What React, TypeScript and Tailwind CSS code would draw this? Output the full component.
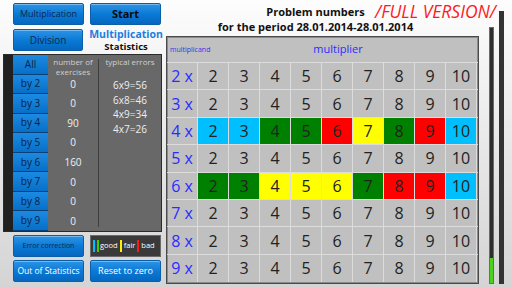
import React from "react";

const btn =
  "flex items-center justify-center rounded-[2px] border border-[#0b5fa8] bg-gradient-to-b from-[#2b94e6] via-[#0a7ad6] to-[#0567c0] shadow-[inset_0_1px_0_rgba(255,255,255,0.35)]";

const rowsColors: Record<number, string[]> = {
  4: ["#00bfff", "#00bfff", "#008000", "#008000", "#ff0000", "#ffff00", "#008000", "#ff0000", "#00bfff"],
  6: ["#008000", "#008000", "#ffff00", "#ffff00", "#ffff00", "#008000", "#ff0000", "#ff0000", "#00bfff"],
};

export default function App() {
  const byRows = ["All", "by 2", "by 3", "by 4", "by 5", "by 6", "by 7", "by 8", "by 9"];
  const counts = ["", "0", "0", "90", "0", "160", "0", "0", "0"];
  const mults = [2, 3, 4, 5, 6, 7, 8, 9];
  const cols = [2, 3, 4, 5, 6, 7, 8, 9, 10];
  return (
    <div className="relative flex h-[288px] w-[512px] overflow-hidden bg-gradient-to-b from-[#fdfdfd] to-[#d4d4d4] font-['Open_Sans',sans-serif]">
      {/* Left column */}
      <div className="flex w-[163px] shrink-0 flex-col pl-[3px] pt-[3px]">
        <div className="ml-[10px] flex h-[22px] gap-[6px]">
          <div className={`${btn} h-[22px] w-[71px] text-[9px] text-[#0d2850]`}>Multiplication</div>
          <div className={`${btn} h-[22px] w-[71px] text-[11px] font-bold text-[#0a0a0a]`}>Start</div>
        </div>
        <div className="ml-[10px] mt-[4px] flex h-[22px] gap-[6px]">
          <div className={`${btn} h-[22px] w-[71px] text-[10px] text-[#0d2850]`}>Division</div>
          <div className="-mt-[1px] flex h-[23px] w-[75px] flex-col items-center">
            <span className="text-[10.5px] font-bold leading-[13px] text-[#1a7fe0]">Multiplication</span>
            <span className="text-[9.5px] font-bold leading-[11px] text-[#111]">Statistics</span>
          </div>
        </div>
        {/* stats panel */}
        <div className="mt-[3px] flex h-[178px] w-[159px] border border-[#2a2a2a] bg-[#686868]">
          <div className="w-[9px] bg-[#202020]" />
          <div className="grid w-[35px] grid-rows-9 bg-[#202020]">
            {byRows.map((r) => (
              <div
                key={r}
                className="flex items-center justify-center border-b border-[#0a3f78] bg-gradient-to-b from-[#1c8ae2] to-[#0670c8] text-[10px] text-[#0c2244]"
              >
                {r}
              </div>
            ))}
          </div>
          <div className="grid w-[50px] grid-rows-9">
            {counts.map((c, i) =>
              i === 0 ? (
                <div key={i} className="flex flex-col items-center pt-[2px] text-[8px] leading-[9.5px] text-[#d0d0d0]">
                  <span>number of</span>
                  <span>exercises</span>
                </div>
              ) : (
                <div key={i} className="flex items-center justify-center text-[10px] text-[#f0f0f0]">
                  {c}
                </div>
              )
            )}
          </div>
          <div className="my-[4px] w-px bg-[#3e3e3e]" />
          <div className="flex flex-1 flex-col items-center pt-[2px] text-[#eeeeee]">
            <span className="text-[8px] leading-[10px] text-[#d0d0d0]">typical errors</span>
            <div className="mt-[11px] flex flex-col items-center text-[10px] leading-[14.7px]">
              <span>6x9=56</span>
              <span>6x8=46</span>
              <span>4x9=34</span>
              <span>4x7=26</span>
            </div>
          </div>
        </div>
        <div className="ml-[10px] mt-[3px] flex gap-[6px]">
          <div className={`${btn} h-[22px] w-[71px] text-[7px] text-[#0d2850]`}>Error correction</div>
          <div className="flex h-[22px] w-[71px] items-center gap-[2px] border border-[#6a6a6a] bg-[#3a3a3a] pl-[2px] text-[7.5px] text-white">
            <span className="h-[12px] w-[2px] bg-[#00bfff]" />
            <span className="h-[12px] w-[2px] bg-[#44cc00]" />
            <span className="-ml-[1px]">good</span>
            <span className="h-[12px] w-[2px] bg-[#ffee00]" />
            <span>fair</span>
            <span className="h-[12px] w-[2px] bg-[#ff1a1a]" />
            <span>bad</span>
          </div>
        </div>
        <div className="ml-[10px] mt-[3px] flex gap-[6px]">
          <div className={`${btn} h-[22px] w-[71px] text-[8.5px] text-white`}>Out of Statistics</div>
          <div className={`${btn} h-[22px] w-[71px] text-[9px] text-white`}>Reset to zero</div>
        </div>
      </div>

      {/* Right column */}
      <div className="ml-[3px] flex w-[313px] shrink-0 flex-col">
        <div className="flex h-[36px] flex-col items-center pt-[4px] text-[11px] font-bold leading-[15px] text-[#111]">
          <span className="ml-[-14px]">Problem numbers</span>
          <span className="ml-[-14px]">for the period 28.01.2014-28.01.2014</span>
        </div>
        <div className="h-[248px] border border-[#4a4a4a] bg-[#c0c0c0] shadow-[inset_0_0_0_1px_#8a8a8a]">
          <div className="flex h-[26px] items-center border-b border-[#dcdcdc]">
            <span className="w-[31px] pl-[3px] pt-[1px] text-[7px] text-[#3434e8]">multiplicand</span>
            <span className="flex-1 text-center text-[11px] text-[#2b2bff]">multiplier</span>
          </div>
          {mults.map((m) => (
            <div key={m} className="flex h-[27.4px] border-b border-[#dcdcdc] last:border-b-0">
              <div className="flex w-[31px] items-center justify-center border-r border-[#dcdcdc] text-[16px] text-[#2b2bff]">
                {m}&nbsp;x
              </div>
              {cols.map((c, i) => {
                const col = rowsColors[m]?.[i];
                return (
                  <div
                    key={c}
                    className="flex w-[31px] items-center justify-center border-r border-[#dcdcdc] text-[16px] text-[#222]"
                    style={col ? { backgroundColor: col } : undefined}
                  >
                    {c}
                  </div>
                );
              })}
            </div>
          ))}
        </div>
      </div>

      {/* bars */}
      <div className="ml-[10px] flex items-end gap-[5px] pb-[4px]">
        <div className="relative h-[257px] w-[5px] border border-[#6b6b6b] bg-[#2e2e2e]">
          <div className="absolute bottom-0 left-0 right-0 h-[25px] bg-[#4ed11e]" />
        </div>
        <div className="h-[273px] w-[5px] bg-[#333]" />
      </div>

      <div className="absolute left-[375px] top-[0px] text-[17.5px] italic leading-[22px] text-[#ff1a1a]">/FULL VERSION/</div>
    </div>
  );
}
